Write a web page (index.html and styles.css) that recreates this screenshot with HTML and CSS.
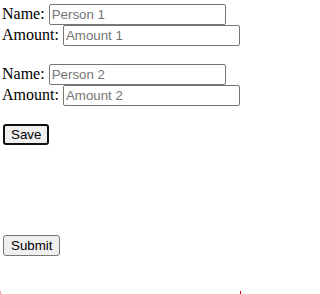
FILE: index.html
```html
<!DOCTYPE html>
<html>
<head>
<meta charset="utf-8">
<link rel="stylesheet" href="styles.css">
</head>
<body>
<div class="page">
  <div class="person">
    <div class="row"><span class="label">Name:</span><input class="field" type="text" placeholder="Person 1"></div>
    <div class="row"><span class="label">Amount:</span><input class="field" type="text" placeholder="Amount 1"></div>
  </div>
  <div class="person">
    <div class="row"><span class="label">Name:</span><input class="field" type="text" placeholder="Person 2"></div>
    <div class="row"><span class="label">Amount:</span><input class="field" type="text" placeholder="Amount 2"></div>
  </div>
  <div class="row save-row"><button class="btn btn-focus" type="button">Save</button></div>
  <div class="row submit-row"><button class="btn" type="button">Submit</button></div>
  <div class="edge"></div>
</div>
</body>
</html>
```
FILE: styles.css
```css
html, body {
  margin: 0;
  padding: 0;
  background: #ffffff;
  overflow: hidden;
}
body {
  font-family: "Liberation Serif", "Times New Roman", serif;
  font-size: 16px;
  color: #000000;
}
.page {
  display: flex;
  flex-direction: column;
  padding: 4px 0 0 2px;
  height: 290px;
}
.person {
  display: flex;
  flex-direction: column;
  margin-bottom: 18px;
}
.row {
  display: flex;
  align-items: baseline;
  gap: 4px;
  height: 21px;
  white-space: nowrap;
}
.label {
  flex: none;
}
.field {
  flex: none;
  box-sizing: border-box;
  width: 177px;
  height: 21px;
  margin: 0;
  padding: 1px 2px;
  border: 1px solid #767676;
  border-radius: 2px;
  font-family: "Liberation Sans", Arial, sans-serif;
  font-size: 13.333px;
  color: #000000;
  background: #ffffff;
}
.field::placeholder {
  color: #757575;
  opacity: 1;
}
.btn {
  box-sizing: border-box;
  height: 21px;
  margin: 0 0 0 1px;
  padding: 1px 7px;
  border: 1px solid #767676;
  border-radius: 3px;
  background: #efefef;
  color: #000000;
  font-family: "Liberation Sans", Arial, sans-serif;
  font-size: 13.333px;
  line-height: 15px;
}
.btn-focus {
  border: 2px solid #101010;
  padding: 0 6px;
}
.submit-row {
  margin-top: 90px;
}
.edge {
  margin-top: auto;
  margin-left: -2px;
  box-sizing: border-box;
  width: 241px;
  height: 3px;
  border-left: 1px solid rgba(200, 0, 40, 0.35);
  border-right: 1px solid #d0001a;
}
```
